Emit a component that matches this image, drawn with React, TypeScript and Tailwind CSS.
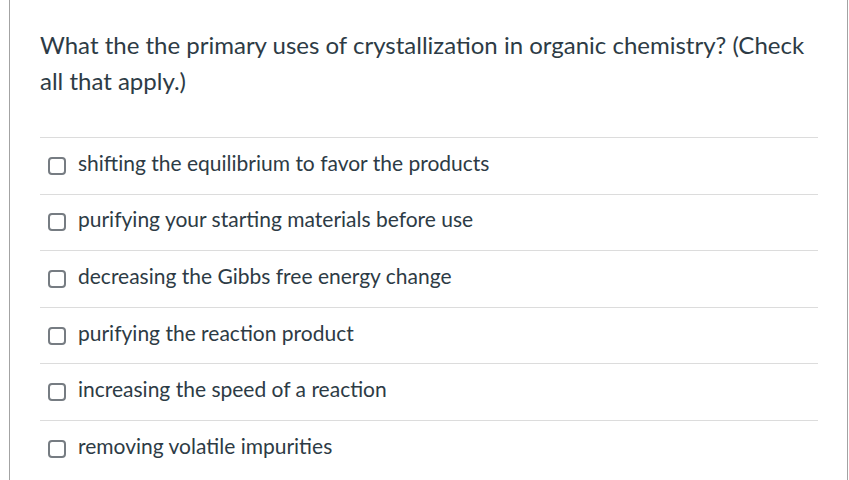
import React from "react";

const options = [
  "shifting the equilibrium to favor the products",
  "purifying your starting materials before use",
  "decreasing the Gibbs free energy change",
  "purifying the reaction product",
  "increasing the speed of a reaction",
  "removing volatile impurities",
];

export default function App() {
  return (
    <div className="w-[849px] h-[480px] bg-white overflow-hidden" style={{ fontFamily: "Lato, 'Noto Sans', sans-serif" }}>
      <div className="ml-[9px] w-[839px] h-[480px] border-x border-[#a3a3a3] pl-[30px] pr-[29px] pt-[27px] text-[#2d3b45]">
        <p className="text-[24px] leading-[36px]">
          What the the primary uses of crystallization in organic chemistry? (Check all that apply.)
        </p>
        <div className="mt-[38px]">
          {options.map((o) => (
            <div key={o} className="border-t border-[#dcdcdc] h-[56.6px] flex items-center pl-[8px]">
              <span className="w-[18px] h-[18px] border-2 border-[#767c82] rounded-[4px] shrink-0" />
              <span className="ml-[12px] text-[21px] leading-[28px] -mt-[6px]">{o}</span>
            </div>
          ))}
        </div>
      </div>
    </div>
  );
}
